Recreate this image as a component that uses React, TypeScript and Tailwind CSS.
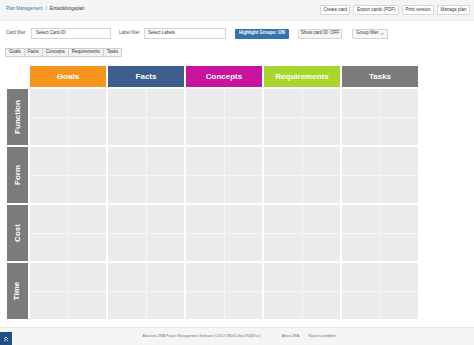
import { ChevronsUp, ChevronDown } from 'lucide-react'

// Spalten und Zeilen des Plans
const columns = [
  { name: 'Goals', color: 'bg-[#f7941d]' },
  { name: 'Facts', color: 'bg-[#3b5e8c]' },
  { name: 'Concepts', color: 'bg-[#c6149e]' },
  { name: 'Requirements', color: 'bg-[#a8d62c]' },
  { name: 'Tasks', color: 'bg-[#7b7b7b]' },
]

const rows = ['Function', 'Form', 'Cost', 'Time']

const tabs = ['Goals', 'Facts', 'Concepts', 'Requirements', 'Tasks']

const topButtons = ['Create card', 'Export cards (PDF)', 'Print version', 'Manage plan']

export default function App() {
  return (
    <div
      className="relative w-[474px] h-[345px] bg-white text-[#333] overflow-hidden flex flex-col"
      style={{ fontFamily: '"Liberation Sans", Arial, sans-serif' }}
    >
      {/* Kopfzeile */}
      <div className="h-[21px] shrink-0 bg-[#f5f5f5] border-b border-[#ececec] flex items-center justify-between pl-[6px] pr-[4px]">
        <div className="text-[4.5px] flex items-center gap-[3px] -mt-[1px]">
          <span className="text-[#3572b0]">Plan Management</span>
          <span className="text-[#555]">/</span>
          <span className="text-[#333]">Entwicklungsplan</span>
        </div>
        <div className="flex items-center gap-[3px]">
          {topButtons.map((b) => (
            <button
              key={b}
              className="h-[10px] px-[2.5px] text-[4.5px] leading-none bg-white border border-[#d6d6d6] rounded-[1px] text-[#333] whitespace-nowrap"
            >
              {b}
            </button>
          ))}
        </div>
      </div>

      {/* Filter */}
      <div className="mt-[7px] h-[11px] flex items-center pl-[6px] text-[4.5px]">
        <span className="text-[#555] w-[25px]">Card filter</span>
        <div className="w-[80px] h-[11px] border border-[#d4d4d4] bg-white flex items-center px-[4px]">Select Card-ID</div>
        <span className="text-[#555] ml-[8px] w-[25px]">Label filter</span>
        <div className="w-[82px] h-[11px] border border-[#d4d4d4] bg-white flex items-center px-[3px]">Select Labels</div>
        <button className="ml-[9px] h-[10px] w-[54px] bg-[#3572b0] text-white text-[4.5px] font-bold rounded-[1px] leading-none whitespace-nowrap">
          Highlight Groups: ON
        </button>
        <button className="ml-[9px] h-[10px] w-[44px] bg-[#f7f7f7] border border-[#d4d4d4] text-[4.5px] rounded-[1px] leading-none whitespace-nowrap">
          Show card ID: OFF
        </button>
        <button className="ml-[10px] h-[10px] w-[36px] bg-[#f7f7f7] border border-[#d4d4d4] text-[4.5px] rounded-[1px] leading-none flex items-center justify-center gap-[1px] whitespace-nowrap">
          Group filter
          <ChevronDown className="w-[4px] h-[4px]" strokeWidth={3} />
        </button>
      </div>

      {/* Gruppen-Tabs */}
      <div className="mt-[9px] ml-[5px] flex h-[9px]">
        {tabs.map((t, i) => (
          <div
            key={t}
            className={`px-[3px] bg-[#f2f2f2] border border-[#d0d0d0] text-[4.5px] flex items-center leading-none ${
              i > 0 ? '-ml-px' : ''
            }`}
          >
            {t}
          </div>
        ))}
      </div>

      {/* Planungsraster */}
      <div className="mt-[9px] ml-[7px] grid grid-cols-[21px_repeat(5,76px)] grid-rows-[21px_repeat(4,56px)] gap-[2px]">
        <div />
        {columns.map((c) => (
          <div
            key={c.name}
            className={`${c.color} text-white font-bold text-[8px] flex items-center justify-center`}
          >
            {c.name}
          </div>
        ))}
        {rows.map((r) => (
          <RowBlock key={r} label={r} />
        ))}
      </div>

      {/* Fußzeile */}
      <div className="mt-auto h-[18px] shrink-0 bg-[#f5f5f5] border-t border-[#e6e6e6] flex items-center justify-center text-[3.5px] text-[#707070] pl-[4px]">
        <span>Atlassian JIRA Project Management Software (v7.8.2#78002-sha1:94467cc)</span>
        <span className="mx-[10px]">·</span>
        <span>About JIRA</span>
        <span className="mx-[4px]">·</span>
        <span>Report a problem</span>
      </div>

      {/* Nach oben */}
      <button className="absolute left-0 bottom-0 w-[12px] h-[13px] bg-[#205081] flex items-center justify-center">
        <ChevronsUp className="w-[8px] h-[8px] text-white" strokeWidth={2.5} />
      </button>
    </div>
  )
}

function RowBlock({ label }: { label: string }) {
  return (
    <>
      <div className="bg-[#7b7b7b] flex items-center justify-center">
        <span className="-rotate-90 text-white font-bold text-[8px] whitespace-nowrap">{label}</span>
      </div>
      {columns.map((c) => (
        <div key={c.name} className="grid grid-cols-2 grid-rows-2 gap-px bg-[#f6f6f6]">
          <div className="bg-[#ebebeb]" />
          <div className="bg-[#ebebeb]" />
          <div className="bg-[#ebebeb]" />
          <div className="bg-[#ebebeb]" />
        </div>
      ))}
    </>
  )
}
